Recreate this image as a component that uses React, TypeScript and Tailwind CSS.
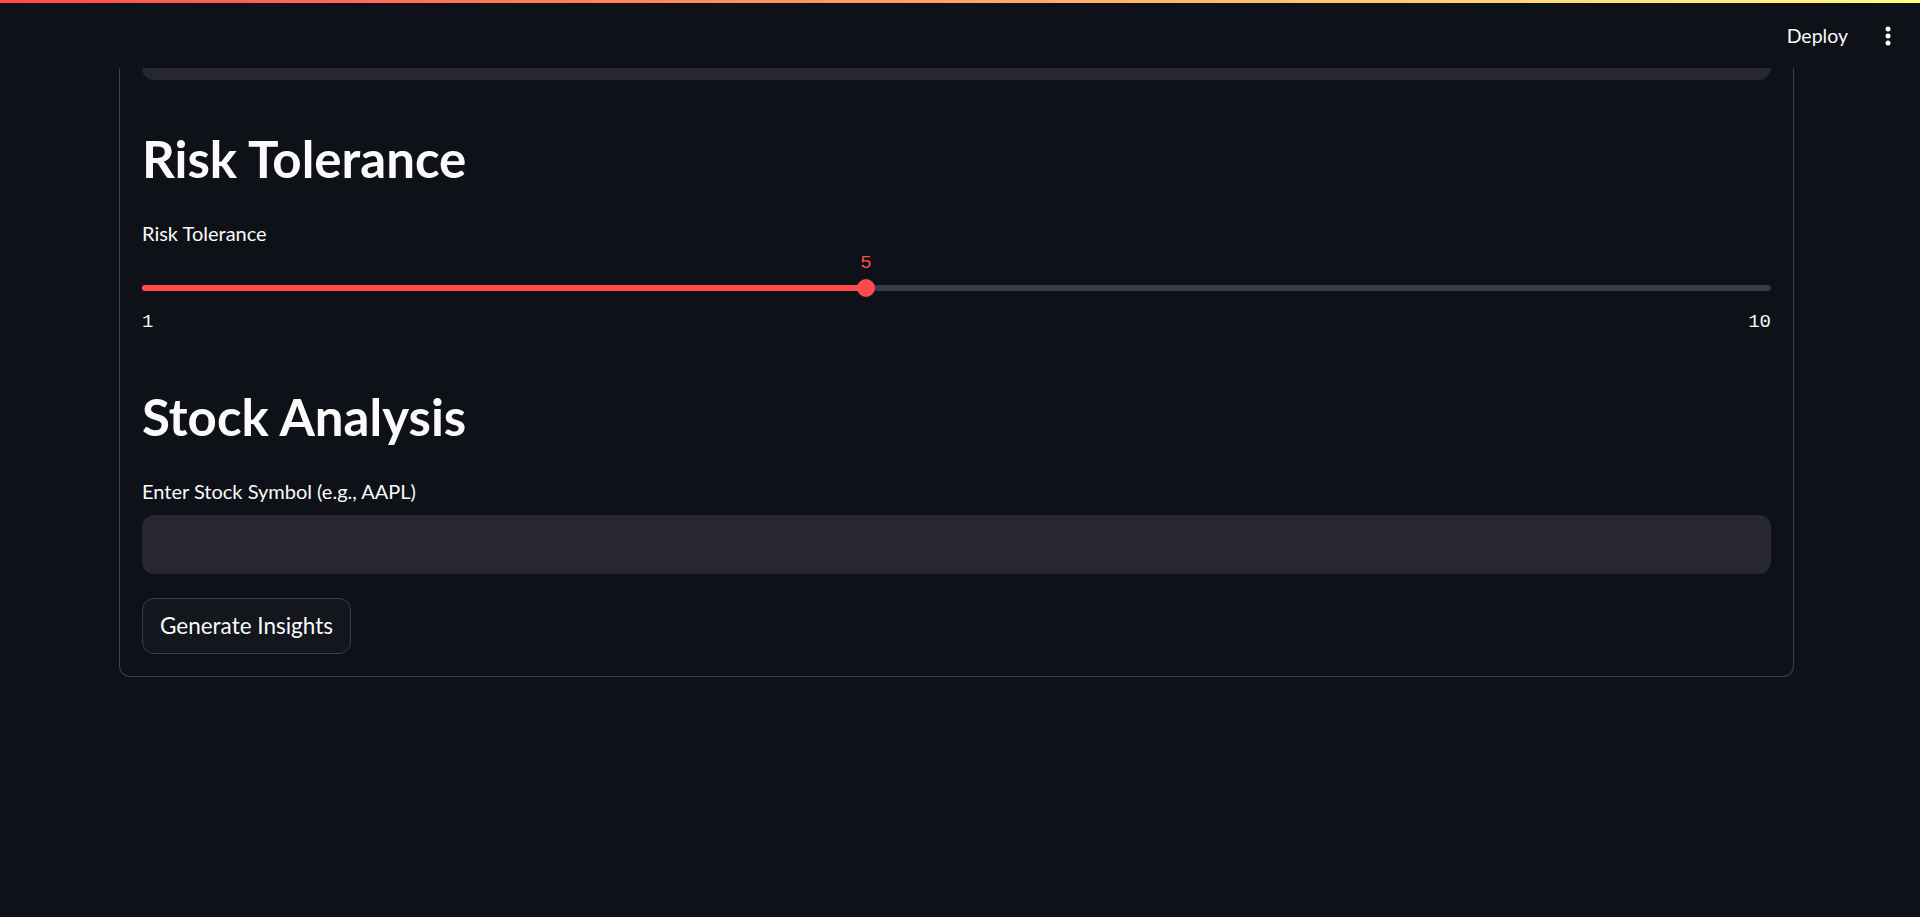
import { useState } from 'react'

const SANS = "font-['Lato','Noto_Sans',sans-serif]"
const MONO = "font-['Liberation_Mono','DejaVu_Sans_Mono',monospace]"

function Header() {
  return (
    <header className="bg-[#0e1117]">
      {/* decoration bar */}
      <div className="h-[3px] bg-[linear-gradient(90deg,#ff4b4b,#fffd80)]" />
      <div className="flex h-[65px] items-center justify-end gap-[31px] pr-[23px]">
        <button className={`${SANS} text-[19.5px] leading-none text-[#fafafa]`}>Deploy</button>
        <svg width="18" height="24" viewBox="0 0 18 24" fill="#fafafa">
          <circle cx="9" cy="5" r="2.5" />
          <circle cx="9" cy="12" r="2.5" />
          <circle cx="9" cy="19" r="2.5" />
        </svg>
      </div>
    </header>
  )
}

function RiskSlider() {
  const [value] = useState(5)
  const min = 1
  const max = 10
  const pct = ((value - min) / (max - min)) * 100

  return (
    <div className="pt-[40px]">
      <div className="relative h-[6px] rounded-full bg-[#393c45]">
        <div className="absolute left-0 top-0 h-full rounded-full bg-[#ff4b4b]" style={{ width: `${pct}%` }} />
        <div
          className="absolute top-1/2 h-[18px] w-[18px] -translate-x-1/2 -translate-y-1/2 rounded-full bg-[#ff4b4b]"
          style={{ left: `${pct}%` }}
        />
        <div
          className={`${MONO} absolute top-[-31px] -translate-x-1/2 text-[19px] leading-[19px] text-[#ff4b4b]`}
          style={{ left: `${pct}%` }}
        >
          {value}
        </div>
      </div>
      <div className={`${MONO} mt-[22px] flex justify-between text-[19px] leading-[19px] text-[#fafafa]`}>
        <span>{min}</span>
        <span>{max}</span>
      </div>
    </div>
  )
}

export default function App() {
  const [symbol, setSymbol] = useState('')

  return (
    <div className={`${SANS} min-h-[917px] bg-[#0e1117] text-[#fafafa]`}>
      <Header />

      <div className="ml-[119px] w-[1675px] rounded-b-[11px] border-x border-b border-[#3d3f46] px-[22px] pb-[22px]">
        {/* bottom of the input above, scrolled under the header */}
        <div className="h-[12px] rounded-b-[12px] bg-[#262730]" />

        {/* Risk Tolerance */}
        <h2 className="mt-[49px] text-[51px] font-bold leading-[60px]">Risk Tolerance</h2>
        <label className="mt-[32px] block text-[20px] leading-[24px]">Risk Tolerance</label>
        <RiskSlider />

        {/* Stock Analysis */}
        <h2 className="mt-[55px] text-[51px] font-bold leading-[60px]">Stock Analysis</h2>
        <label className="mt-[32px] block text-[20px] leading-[24px]">Enter Stock Symbol (e.g., AAPL)</label>
        <input
          value={symbol}
          onChange={e => setSymbol(e.target.value)}
          className="mt-[12px] block h-[59px] w-full rounded-[12px] bg-[#262730] px-[18px] text-[21px] text-[#fafafa] outline-none"
        />
        <button className="mt-[24px] flex h-[56px] w-[209px] items-center justify-center rounded-[12px] border border-[#3d3f46] bg-[#13161d] text-[22.5px] text-[#fafafa]">
          Generate Insights
        </button>
      </div>
    </div>
  )
}
